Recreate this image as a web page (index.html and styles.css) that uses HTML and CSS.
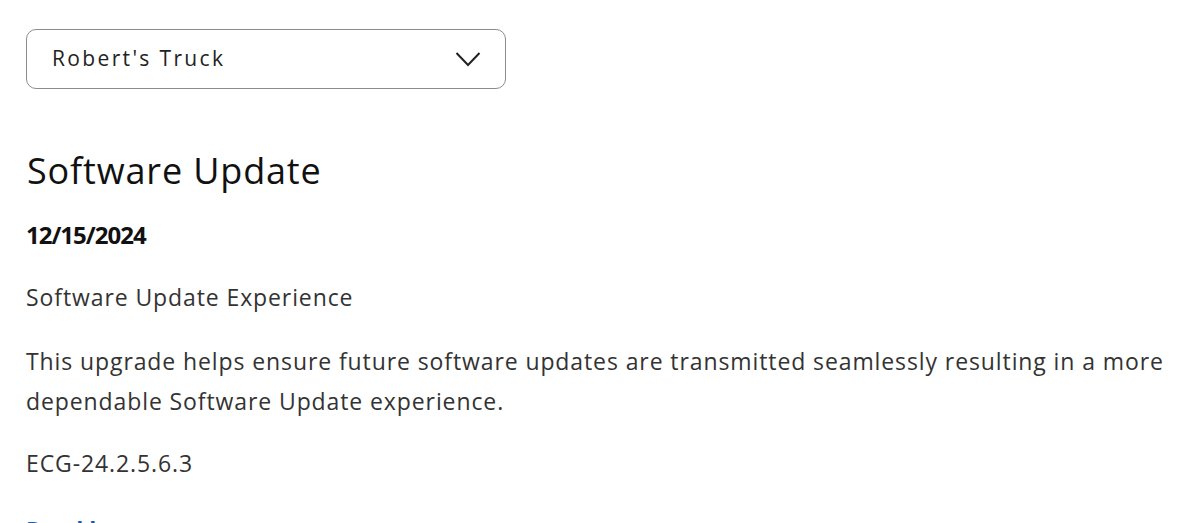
FILE: index.html
```html
<!DOCTYPE html>
<html>
<head>
<meta charset="utf-8">
<link rel="stylesheet" href="styles.css">
</head>
<body>
<main class="page">
  <div class="select">
    <span class="select-label">Robert's Truck</span>
    <svg class="chevron" width="26" height="16" viewBox="0 0 26 16"><path d="M1.5 2 L13 14 L24.5 2" fill="none" stroke="#222" stroke-width="2"/></svg>
  </div>
  <h1 class="title">Software Update</h1>
  <p class="date">12/15/2024</p>
  <p class="text text-first">Software Update Experience</p>
  <p class="text text-para">This upgrade helps ensure future software updates are transmitted seamlessly resulting in a more dependable Software Update experience.</p>
  <p class="text text-version">ECG-24.2.5.6.3</p>
  <a class="link" href="#">Read less</a>
</main>
</body>
</html>
```
FILE: styles.css
```css
html, body { margin: 0; padding: 0; background: #fff; }
body { font-family: "Open Sans", "Noto Sans", sans-serif; color: #333; }
.page { padding: 29px 26px 0 26px; width: 1150px; }
.select {
  box-sizing: border-box;
  width: 480px; height: 60px;
  border: 1px solid #8c8c8c; border-radius: 10px;
  display: flex; align-items: center; justify-content: space-between;
  padding: 0 24px 2px 25px;
}
.select-label { font-size: 21px; letter-spacing: 2.35px; color: #222; }
.chevron { margin-top: 2px; }
.title { font-size: 36px; font-weight: 400; color: #111; margin: 58px 0 0 1px; line-height: 48px; letter-spacing: 0.85px; }
.date { font-size: 24px; font-weight: 700; color: #111; margin: 25px 0 0 0; letter-spacing: -1px; line-height: 30px; }
.text { font-size: 23px; line-height: 40px; margin: 0; color: #333; letter-spacing: 0.9px; }
.text-first { margin-top: 27px; }
.text-para { margin-top: 24px; }
.text-version { margin-top: 22px; }
.link { display: block; font-size: 23px; font-weight: 700; color: #1f58a8; text-decoration: none; margin-top: 27px; line-height: 40px; }
```
